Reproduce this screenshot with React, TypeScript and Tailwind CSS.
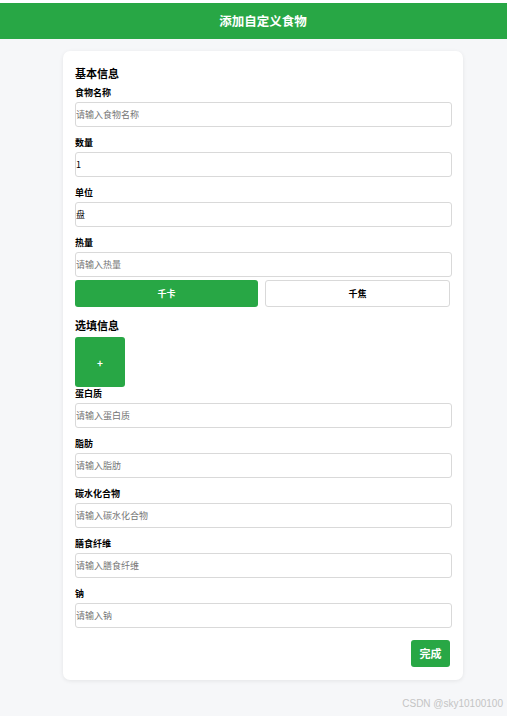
import React from "react";

const font = { fontFamily: '"Noto Sans CJK SC", "Noto Sans", sans-serif' };

function Field({ label, placeholder, value }: { label: string; placeholder: string; value?: string }) {
  return (
    <div className="flex flex-col">
      <div className="h-[14px] leading-[14px] text-[9px] font-bold text-black mb-[2px]">{label}</div>
      <input
        className="h-[25px] w-full border border-[#d9d9d9] rounded-[3px] px-0 text-[9px] text-black placeholder:text-[#757575] outline-none bg-white"
        placeholder={placeholder}
        defaultValue={value}
      />
    </div>
  );
}

export default function App() {
  return (
    <div className="relative min-h-[716px] bg-[#f6f7f9] pt-[3px]" style={font}>
      <div className="absolute top-0 left-0 right-0 h-[3px] bg-white" />
      <div className="h-[36px] bg-[#28a745] flex items-center justify-center pl-[19px]">
        <span className="text-white font-bold text-[12.5px]">添加自定义食物</span>
      </div>
      <div className="flex justify-center pt-[12px] pl-[19px]">
        <div className="w-[400px] bg-white rounded-[7px] shadow-[0_1px_4px_rgba(0,0,0,0.08)] pl-[12px] pr-[11px] pt-[14px] pb-[13px]">
          <div className="h-4 leading-4 text-[11px] font-bold text-black mb-[5px]">基本信息</div>
          <div className="flex flex-col gap-[9px]">
            <Field label="食物名称" placeholder="请输入食物名称" />
            <Field label="数量" placeholder="" value="1" />
            <Field label="单位" placeholder="" value="盘" />
            <Field label="热量" placeholder="请输入热量" />
          </div>
          <div className="flex gap-[7px] mt-[3px] pr-[2px]">
            <button className="flex-1 h-[27px] rounded-[3px] bg-[#28a745] text-white text-[9px] font-bold">千卡</button>
            <button className="flex-1 h-[27px] rounded-[3px] bg-white border border-[#d9d9d9] text-black text-[9px] font-bold">千焦</button>
          </div>
          <div className="h-4 leading-4 text-[11px] font-bold text-black mt-[10px] mb-[4px]">选填信息</div>
          <button className="w-[50px] h-[50px] rounded-[3px] bg-[#28a745] text-white text-[10px] font-bold flex items-center justify-center">+</button>
          <div className="flex flex-col gap-[9px]">
            <Field label="蛋白质" placeholder="请输入蛋白质" />
            <Field label="脂肪" placeholder="请输入脂肪" />
            <Field label="碳水化合物" placeholder="请输入碳水化合物" />
            <Field label="膳食纤维" placeholder="请输入膳食纤维" />
            <Field label="钠" placeholder="请输入钠" />
          </div>
          <div className="flex justify-end mt-[12px] pr-[2px]">
            <button className="w-[39px] h-[27px] rounded-[3px] bg-[#28a745] text-white text-[11px] font-bold">完成</button>
          </div>
        </div>
      </div>
      <div
        className="absolute right-[4px] top-[697px] text-[10px] text-[#c4c4c4] leading-[14px]"
        style={{ fontFamily: '"Liberation Sans", Arial, sans-serif' }}
      >
        CSDN @sky10100100
      </div>
    </div>
  );
}
